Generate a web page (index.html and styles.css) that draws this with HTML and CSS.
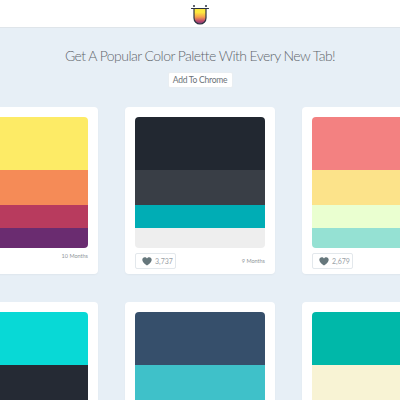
FILE: index.html
```html
<!DOCTYPE html>
<html lang="en">
<head>
    <meta charset="UTF-8">
    <title>Color Tab</title>
    <link rel="stylesheet" href="styles.css">
</head>
<body>

    <header class="top-bar">
        <svg class="logo" width="24" height="24" viewBox="0 0 24 24">
            <defs>
                <linearGradient id="tongue" x1="0" y1="0" x2="0" y2="1">
                    <stop offset="0.25" stop-color="#fde93f"/>
                    <stop offset="0.55" stop-color="#f6a04d"/>
                    <stop offset="0.8" stop-color="#bf4a6b"/>
                    <stop offset="1" stop-color="#6c3a7c"/>
                </linearGradient>
            </defs>
            <circle cx="6" cy="4" r="1" fill="#2c3240"/>
            <circle cx="18" cy="4" r="1" fill="#2c3240"/>
            <path d="M3.500 6.500 H20.500 M6 6.500 V16 a6 6 0 0 0 12 0 V6.500" fill="url(#tongue)" stroke="#2c3240" stroke-width="1.200" stroke-linecap="round"/>
        </svg>
    </header>

    <section class="intro">
        <h1>Get A Popular Color Palette With Every New Tab!</h1>
        <button class="add-btn">Add To Chrome</button>
    </section>

    <main class="palettes">
        <article class="card">
            <div class="swatch">
                <div class="c1" style="background: #fdeb66"></div>
                <div class="c2" style="background: #f58b57"></div>
                <div class="c3" style="background: #b83b5e"></div>
                <div class="c4" style="background: #6a2c70"></div>
            </div>
            <div class="card-foot">
                <span></span>
                <span class="age">10 Months</span>
            </div>
        </article>
        <article class="card">
            <div class="swatch">
                <div class="c1" style="background: #222831"></div>
                <div class="c2" style="background: #393e46"></div>
                <div class="c3" style="background: #00adb5"></div>
                <div class="c4" style="background: #eeeeee"></div>
            </div>
            <div class="card-foot">
                <button class="like">
                    <svg class="heart" width="10" height="9" viewBox="0 0 24 22"><path d="M12 21 C4 14.500 0.500 11 0.500 6.500 C0.500 3 3.200 0.500 6.500 0.500 C8.800 0.500 10.800 1.600 12 3.600 C13.200 1.600 15.200 0.500 17.500 0.500 C20.800 0.500 23.500 3 23.500 6.500 C23.500 11 20 14.500 12 21 Z"/></svg>
                    3,737
                </button>
                <span class="age">9 Months</span>
            </div>
        </article>
        <article class="card">
            <div class="swatch">
                <div class="c1" style="background: #f38181"></div>
                <div class="c2" style="background: #fce38a"></div>
                <div class="c3" style="background: #eaffd0"></div>
                <div class="c4" style="background: #95e1d3"></div>
            </div>
            <div class="card-foot">
                <button class="like">
                    <svg class="heart" width="10" height="9" viewBox="0 0 24 22"><path d="M12 21 C4 14.500 0.500 11 0.500 6.500 C0.500 3 3.200 0.500 6.500 0.500 C8.800 0.500 10.800 1.600 12 3.600 C13.200 1.600 15.200 0.500 17.500 0.500 C20.800 0.500 23.500 3 23.500 6.500 C23.500 11 20 14.500 12 21 Z"/></svg>
                    2,679
                </button>
                <span class="age"></span>
            </div>
        </article>
        <article class="card">
            <div class="swatch">
                <div class="c1" style="background: #08d9d6"></div>
                <div class="c2" style="background: #252a34"></div>
            </div>
        </article>
        <article class="card">
            <div class="swatch">
                <div class="c1" style="background: #364f6b"></div>
                <div class="c2" style="background: #3fc1c9"></div>
            </div>
        </article>
        <article class="card">
            <div class="swatch">
                <div class="c1" style="background: #00b8a9"></div>
                <div class="c2" style="background: #f8f3d4"></div>
            </div>
        </article>
    </main>

</body>
</html>
```

FILE: styles.css
```css
html, body {
    height: 400px;
    overflow: hidden;
}
body {
    margin: 0;
    font-family: Lato, "Open Sans", sans-serif;
    background: #e7eff6;
    color: #6b7278;
}
.top-bar {
    height: 28px;
    background: white;
    border-bottom: 1px solid #dfe5ea;
    display: flex;
    justify-content: center;
    align-items: flex-start;
    padding-top: 2px;
    box-sizing: border-box;
}
.intro {
    text-align: center;
    padding-top: 17px;
}
h1 {
    margin: 0;
    font-size: 14px;
    line-height: 22px;
    font-weight: 300;
    letter-spacing: -0.55px;
    color: #5f666c;
}
.add-btn {
    display: block;
    margin: 5px auto 0;
    width: 65px;
    height: 16px;
    padding: 0;
    background: white;
    border: 1px solid #e9eef2;
    border-radius: 2px;
    font-family: Lato, sans-serif;
    font-size: 8.500px;
    letter-spacing: -0.25px;
    color: #6b7278;
}
.palettes {
    display: grid;
    grid-template-columns: repeat(3, 150px);
    grid-auto-rows: 167px;
    gap: 28px 27px;
    justify-content: center;
    margin-top: 19px;
}
.card {
    background: white;
    border-radius: 4px;
    padding: 10px;
    box-shadow: 0 1px 2px rgba(0, 0, 0, 0.04);
}
.swatch {
    height: 131px;
    border-radius: 4px;
    overflow: hidden;
}
.c1 { height: 53px; }
.c2 { height: 35px; }
.c3 { height: 23px; }
.c4 { height: 20px; }
.card-foot {
    display: flex;
    justify-content: space-between;
    align-items: center;
    margin-top: 5px;
}
.like {
    display: flex;
    align-items: center;
    gap: 3px;
    width: 41px;
    height: 16px;
    padding: 0 0 0 6px;
    background: white;
    border: 1px solid #e3e8ec;
    border-radius: 2px;
    font-family: Lato, sans-serif;
    font-size: 7px;
    color: #9aa1a6;
}
.heart {
    fill: #66777c;
}
.age {
    font-size: 5.500px;
    color: #90969a;
}
```
